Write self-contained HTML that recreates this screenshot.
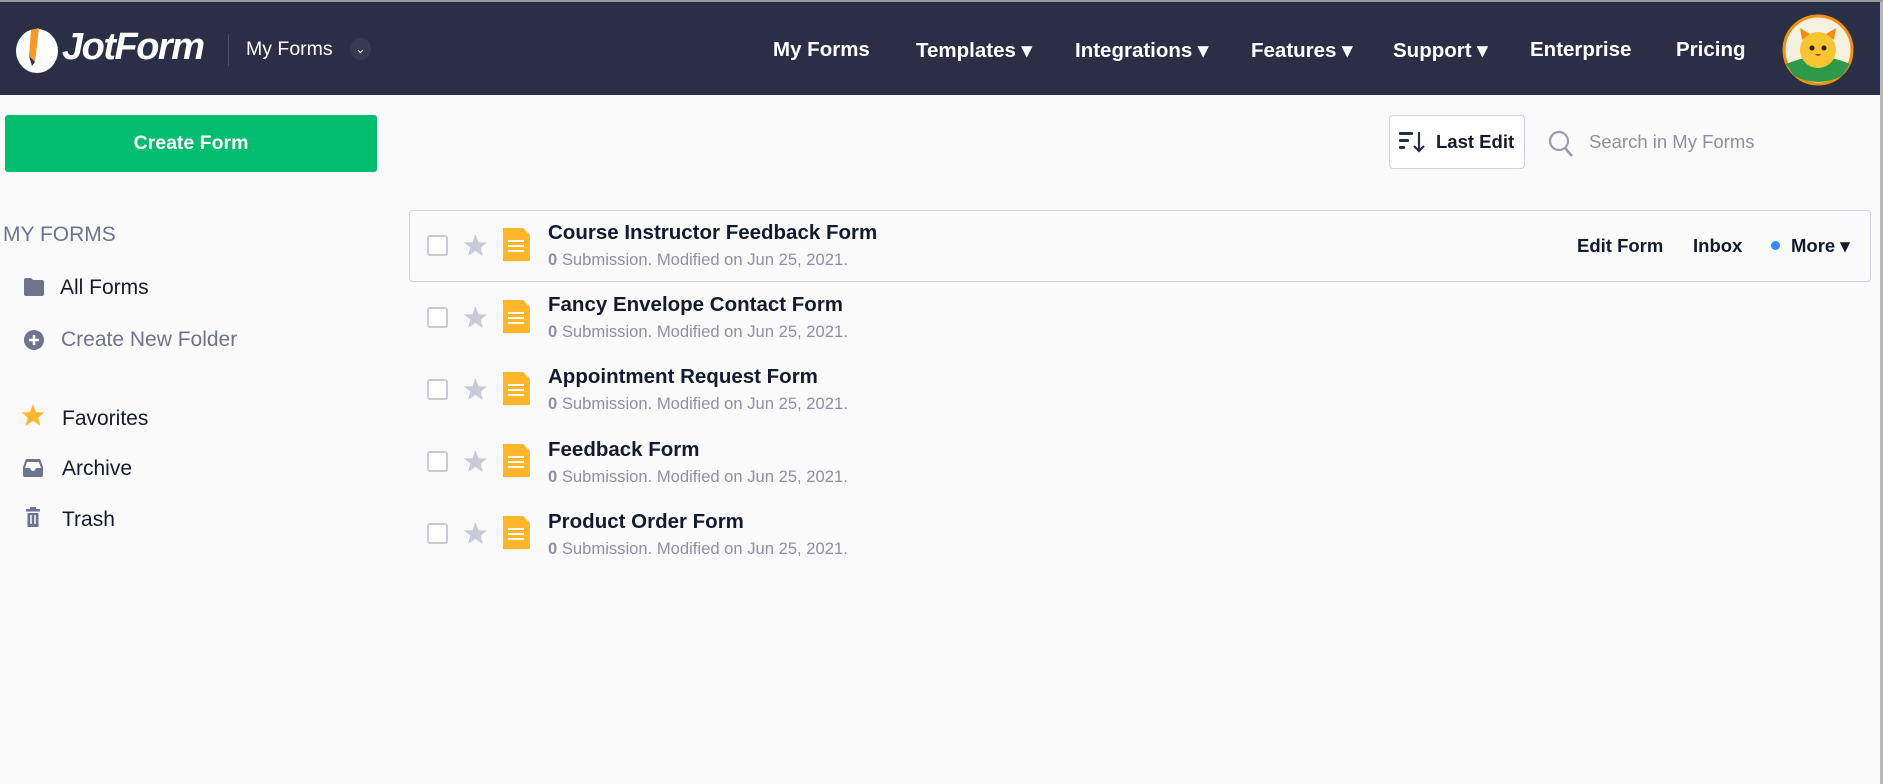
<!DOCTYPE html>
<html><head><meta charset="utf-8"><style>
*{margin:0;padding:0;box-sizing:border-box}
body{width:1883px;height:782px;background:#fafafb;font-family:"Liberation Sans",sans-serif;position:relative;overflow:hidden;border-top:2px solid #9a9a9a}
.hdr{position:absolute;left:0;top:0;width:1880px;height:93px;background:#2a2f45}
.abs{position:absolute;white-space:nowrap}
.nav{color:#fff;font-size:20.5px;font-weight:bold;top:36px}
.side{font-size:21px;color:#141a2e}
.title{font-size:20.5px;font-weight:bold;color:#141a2e}
.sub{font-size:16.6px;color:#8d8fa8}
.sub b{color:#8d8fa8}
.cb{position:absolute;width:21px;height:21px;border:2px solid #c8cad8;border-radius:3px;background:#fff}
</style></head><body>
<div class="hdr">
  <svg class="abs" style="left:15px;top:24px" width="44" height="48" viewBox="0 0 44 48"><ellipse cx="22" cy="25" rx="21" ry="22" fill="#fff"/><path d="M16 4 L24 2 L20 36 L14 30 Z" fill="#f59a23"/><path d="M14 30 L20 36 L17 40Z" fill="#2a2f45"/></svg>
  <div class="abs" style="left:62px;top:24px;color:#fff;font-size:38px;font-weight:bold;font-style:italic;letter-spacing:-1.5px">JotForm</div>
  <div class="abs" style="left:228px;top:32px;width:1px;height:32px;background:#4a5068"></div>
  <div class="abs" style="left:246px;top:36px;color:#fff;font-size:19.5px">My Forms</div>
  <div class="abs" style="left:350px;top:36px;width:21px;height:22px;border-radius:11px;background:#343a52;color:#fff;font-size:13px;text-align:center;line-height:22px">&#8964;</div>
  <div class="abs nav" style="left:773px">My Forms</div>
  <div class="abs nav" style="left:916px">Templates ▾</div>
  <div class="abs nav" style="left:1075px">Integrations ▾</div>
  <div class="abs nav" style="left:1251px">Features ▾</div>
  <div class="abs nav" style="left:1393px">Support ▾</div>
  <div class="abs nav" style="left:1530px">Enterprise</div>
  <div class="abs nav" style="left:1676px">Pricing</div>
  <svg class="abs" style="left:1782px;top:12px" width="72" height="72" viewBox="0 0 72 72"><circle cx="36" cy="36" r="34" fill="#f5f1e0" stroke="#f2900d" stroke-width="3"/><path d="M4 50 Q36 36 68 50 L60 62 Q36 74 12 62Z" fill="#2e9a47"/><circle cx="36" cy="36" r="18" fill="#f7c531"/><path d="M20 26 L18 14 L28 20Z M52 26 L54 14 L44 20Z" fill="#f2900d"/><circle cx="30" cy="34" r="2.5" fill="#222"/><circle cx="42" cy="34" r="2.5" fill="#222"/><path d="M33 40 Q36 44 39 40" fill="#c33"/></svg>
</div>
<div class="abs" style="left:1880px;top:0;width:3px;height:782px;background:#b8b8b8"></div>

<div class="abs" style="left:5px;top:113px;width:372px;height:57px;background:#01bd6f;border-radius:3px;color:#fff;font-size:19.5px;font-weight:bold;text-align:center;line-height:57px">Create Form</div>

<div class="abs" style="left:1389px;top:113px;width:136px;height:54px;border:1px solid #d0d2dc;border-radius:4px;background:#fff"></div>
<svg class="abs" style="left:1399px;top:128px" width="26" height="24" viewBox="0 0 26 24"><g fill="#2a2f45"><rect x="0" y="2" width="14" height="3" rx="1"/><rect x="0" y="9" width="10" height="3" rx="1"/><rect x="0" y="16" width="6" height="3" rx="1"/></g><path d="M20 2 V21 M15 16 L20 21 L25 16" stroke="#2a2f45" stroke-width="2.2" fill="none"/></svg>
<div class="abs" style="left:1436px;top:129px;font-size:18.5px;font-weight:bold;color:#141a2e">Last Edit</div>
<svg class="abs" style="left:1548px;top:127px" width="28" height="30" viewBox="0 0 28 30"><circle cx="11" cy="12" r="9" stroke="#9a9cb2" stroke-width="2.2" fill="none"/><path d="M17 19 L24 27" stroke="#9a9cb2" stroke-width="2.5"/></svg>
<div class="abs" style="left:1589px;top:129px;font-size:18.5px;color:#8d8fa8">Search in My Forms</div>

<div class="abs" style="left:3px;top:221px;font-size:21px;color:#6f7390">MY FORMS</div>
<svg class="abs" style="left:24px;top:276px" width="20" height="18" viewBox="0 0 20 18"><path d="M0 2 Q0 0 2 0 H7 L9 2 H18 Q20 2 20 4 V16 Q20 18 18 18 H2 Q0 18 0 16Z" fill="#6f7390"/></svg>
<div class="abs side" style="left:60px;top:274px">All Forms</div>
<svg class="abs" style="left:24px;top:328px" width="20" height="20" viewBox="0 0 20 20"><circle cx="10" cy="10" r="10" fill="#6f7390"/><path d="M10 5V15M5 10H15" stroke="#fff" stroke-width="2.5"/></svg>
<div class="abs side" style="left:61px;top:326px;color:#6f7390">Create New Folder</div>
<svg class="abs" style="left:20px;top:401px" width="26" height="25" viewBox="0 0 24 24"><path d="M12 1 L15 9 L23 9 L17 14 L19 22 L12 17 L5 22 L7 14 L1 9 L9 9Z" fill="#ffb629"/></svg>
<div class="abs side" style="left:62px;top:405px">Favorites</div>
<svg class="abs" style="left:23px;top:457px" width="20" height="18" viewBox="0 0 20 18"><path d="M3 0 H17 L20 8 V16 Q20 18 18 18 H2 Q0 18 0 16 V8Z" fill="#6f7390"/><path d="M4 3 H16 L18 9 H13 Q12 12 10 12 Q8 12 7 9 H2Z" fill="#fafafb"/></svg>
<div class="abs side" style="left:62px;top:455px">Archive</div>
<svg class="abs" style="left:26px;top:505px" width="14" height="20" viewBox="0 0 14 20"><rect x="0" y="2" width="14" height="2.5" fill="#6f7390"/><rect x="4" y="0" width="6" height="2" fill="#6f7390"/><path d="M1.5 6 H12.5 V20 H1.5Z" fill="#6f7390"/><path d="M5 8 V17 M9 8 V17" stroke="#fafafb" stroke-width="1.5"/></svg>
<div class="abs side" style="left:62px;top:506px">Trash</div>

<div class="abs" style="left:409px;top:208px;width:1462px;height:72px;border:1px solid #d3d5df;border-radius:4px;background:#fafafb"></div>
<div class="abs" style="left:1577px;top:233px;font-size:18.5px;font-weight:bold;color:#141a2e">Edit Form</div>
<div class="abs" style="left:1693px;top:233px;font-size:18.5px;font-weight:bold;color:#141a2e">Inbox</div>
<div class="abs" style="left:1771px;top:239px;width:9px;height:9px;border-radius:5px;background:#2f8cfa"></div>
<div class="abs" style="left:1791px;top:233px;font-size:18.5px;font-weight:bold;color:#141a2e">More ▾</div>

<div class="cb" style="left:427px;top:233px"></div>
<div class="cb" style="left:427px;top:305px"></div>
<div class="cb" style="left:427px;top:377px"></div>
<div class="cb" style="left:427px;top:449px"></div>
<div class="cb" style="left:427px;top:521px"></div>
<svg width="0" height="0" style="position:absolute"><defs><g id="st"><path d="M12 1 L15 9 L23 9 L17 14 L19 22 L12 17 L5 22 L7 14 L1 9 L9 9Z" fill="#c8cad8"/></g><g id="dc"><path d="M0 0 H20 L27 7 V33 H0Z" fill="#ffb629"/><path d="M5 13 H21 M5 18 H21 M5 23 H21" stroke="#fff" stroke-width="2"/></g></defs></svg>
<svg class="abs" style="left:463px;top:231px" width="25" height="25" viewBox="0 0 24 24"><use href="#st"/></svg>
<svg class="abs" style="left:463px;top:303px" width="25" height="25" viewBox="0 0 24 24"><use href="#st"/></svg>
<svg class="abs" style="left:463px;top:375px" width="25" height="25" viewBox="0 0 24 24"><use href="#st"/></svg>
<svg class="abs" style="left:463px;top:447px" width="25" height="25" viewBox="0 0 24 24"><use href="#st"/></svg>
<svg class="abs" style="left:463px;top:519px" width="25" height="25" viewBox="0 0 24 24"><use href="#st"/></svg>
<svg class="abs" style="left:503px;top:226px" width="27" height="33"><use href="#dc"/></svg>
<svg class="abs" style="left:503px;top:298px" width="27" height="33"><use href="#dc"/></svg>
<svg class="abs" style="left:503px;top:370px" width="27" height="33"><use href="#dc"/></svg>
<svg class="abs" style="left:503px;top:442px" width="27" height="33"><use href="#dc"/></svg>
<svg class="abs" style="left:503px;top:514px" width="27" height="33"><use href="#dc"/></svg>

<div class="abs title" style="left:548px;top:219px">Course Instructor Feedback Form</div>
<div class="abs sub" style="left:548px;top:248px"><b>0</b> Submission. Modified on Jun 25, 2021.</div>
<div class="abs title" style="left:548px;top:291px">Fancy Envelope Contact Form</div>
<div class="abs sub" style="left:548px;top:320px"><b>0</b> Submission. Modified on Jun 25, 2021.</div>
<div class="abs title" style="left:548px;top:363px">Appointment Request Form</div>
<div class="abs sub" style="left:548px;top:392px"><b>0</b> Submission. Modified on Jun 25, 2021.</div>
<div class="abs title" style="left:548px;top:436px">Feedback Form</div>
<div class="abs sub" style="left:548px;top:465px"><b>0</b> Submission. Modified on Jun 25, 2021.</div>
<div class="abs title" style="left:548px;top:508px">Product Order Form</div>
<div class="abs sub" style="left:548px;top:537px"><b>0</b> Submission. Modified on Jun 25, 2021.</div>
</body></html>
